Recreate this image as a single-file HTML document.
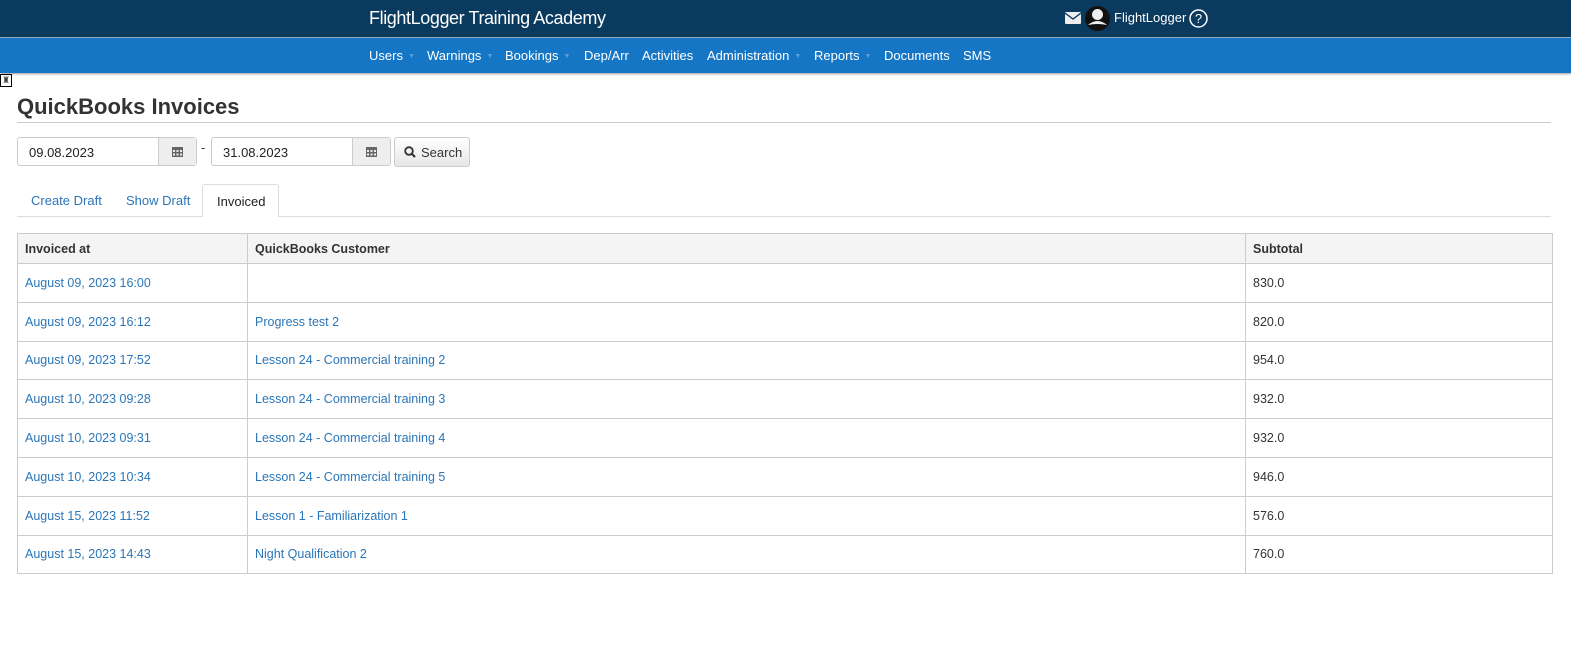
<!DOCTYPE html>
<html><head><meta charset="utf-8"><style>
body{margin:0;font-family:"Liberation Sans",Arial,sans-serif;font-size:13px;color:#333;background:#fff;width:1571px;height:668px;overflow:hidden;position:relative}
.top{position:absolute;left:0;top:0;width:1571px;height:37px;background:#0b3a5f;border-bottom:1px solid #9ab}
.top .t{position:absolute;left:369px;top:8px;color:#fff;font-size:18px;letter-spacing:-0.4px}
.nav{position:absolute;left:0;top:38px;width:1571px;height:35px;background:#1576c6;box-shadow:0 1px 2px #999}
.nav span{position:absolute;top:10px;color:#fff;font-size:13px;white-space:nowrap}
.nav .car{position:static;color:#5f9fd6;font-size:7px;margin-left:5px;vertical-align:2px}
a{color:#2a76b8;text-decoration:none}
h1{position:absolute;left:17px;top:94px;margin:0;font-size:22px;font-weight:bold;color:#333}
.hr{position:absolute;left:17px;width:1534px;top:122px;height:1px;background:#ccc}
.inp{position:absolute;top:137px;height:29px;border:1px solid #ccc;border-radius:3px;box-sizing:border-box;background:#fff}
.inp .v{position:absolute;left:11px;top:7px;font-size:13px;color:#222}
.inp .ad{position:absolute;right:0;top:0;width:37px;height:27px;background:#eee;border-left:1px solid #ccc}
table{position:absolute;left:17px;top:233px;width:1536px;border-collapse:collapse}
td,th{border:1px solid #ccc;padding:0 7px;text-align:left;height:37.8px;font-size:12.5px}
th{background:#f4f4f4;height:29px;font-weight:bold}
</style></head><body>
<div class="top"><div class="t">FlightLogger Training Academy</div>
<svg style="position:absolute;left:1065px;top:12px" width="16" height="12"><rect width="16" height="12" rx="1" fill="#eee"/><path d="M0 1 L8 7 L16 1" stroke="#0b3a5f" stroke-width="1.3" fill="none"/></svg>
<svg style="position:absolute;left:1085px;top:6px" width="25" height="25"><circle cx="12.5" cy="12.5" r="12.5" fill="#111"/><circle cx="12.5" cy="8.5" r="5.5" fill="#eee"/><path d="M3 19 Q12.5 11 22 19 Q12.5 17 3 19Z" fill="#eee"/></svg>
<span style="position:absolute;left:1114px;top:10px;color:#fff;font-size:13px">FlightLogger</span>
<svg style="position:absolute;left:1189px;top:9px" width="19" height="19"><circle cx="9.5" cy="9.5" r="8.5" stroke="#fff" stroke-width="1.5" fill="none"/><text x="9.5" y="14" text-anchor="middle" fill="#fff" font-size="13" font-family="Liberation Sans">?</text></svg>
</div>
<div class="nav">
<span style="left:369px">Users<span class="car">▼</span></span>
<span style="left:427px">Warnings<span class="car">▼</span></span>
<span style="left:505px">Bookings<span class="car">▼</span></span>
<span style="left:584px">Dep/Arr</span>
<span style="left:642px">Activities</span>
<span style="left:707px">Administration<span class="car">▼</span></span>
<span style="left:814px">Reports<span class="car">▼</span></span>
<span style="left:884px">Documents</span>
<span style="left:963px">SMS</span>
</div>
<div style="position:absolute;left:0;top:74px;width:12px;height:13px;border:1px solid #000;box-sizing:border-box;font-size:9px;line-height:11px;text-align:center">♜</div>
<h1>QuickBooks Invoices</h1><div class="hr"></div>
<div class="inp" style="left:17px;width:180px"><span class="v">09.08.2023</span><div class="ad"><svg style="position:absolute;left:13px;top:8px" width="11" height="11"><rect x="0" y="1" width="11" height="10" fill="#666"/><g fill="#eee"><rect x="1" y="4" width="2" height="2"/><rect x="4.5" y="4" width="2" height="2"/><rect x="8" y="4" width="2" height="2"/><rect x="1" y="7.5" width="2" height="2"/><rect x="4.5" y="7.5" width="2" height="2"/><rect x="8" y="7.5" width="2" height="2"/></g></svg></div></div>
<span style="position:absolute;left:201px;top:140px">-</span>
<div class="inp" style="left:211px;width:180px"><span class="v">31.08.2023</span><div class="ad"><svg style="position:absolute;left:13px;top:8px" width="11" height="11"><rect x="0" y="1" width="11" height="10" fill="#666"/><g fill="#eee"><rect x="1" y="4" width="2" height="2"/><rect x="4.5" y="4" width="2" height="2"/><rect x="8" y="4" width="2" height="2"/><rect x="1" y="7.5" width="2" height="2"/><rect x="4.5" y="7.5" width="2" height="2"/><rect x="8" y="7.5" width="2" height="2"/></g></svg></div></div>
<div style="position:absolute;left:394px;top:137px;width:76px;height:30px;box-sizing:border-box;border:1px solid #ccc;border-radius:3px;background:linear-gradient(#fff,#e6e6e6)">
<svg style="position:absolute;left:9px;top:8px" width="12" height="12"><circle cx="5" cy="5" r="3.8" stroke="#333" stroke-width="1.8" fill="none"/><path d="M7.5 7.5 L11 11" stroke="#333" stroke-width="2.2"/></svg>
<span style="position:absolute;left:26px;top:7px">Search</span></div>
<a style="position:absolute;left:31px;top:193px">Create Draft</a>
<a style="position:absolute;left:126px;top:193px">Show Draft</a>
<div style="position:absolute;left:17px;top:216px;width:1534px;height:1px;background:#ddd"></div>
<div style="position:absolute;left:202px;top:184px;width:77px;height:33px;box-sizing:border-box;border:1px solid #ddd;border-bottom:none;border-radius:3px 3px 0 0;background:#fff"><span style="position:absolute;left:14px;top:9px;color:#222">Invoiced</span></div>
<table>
<tr><th style="width:215px">Invoiced at</th><th>QuickBooks Customer</th><th style="width:292px">Subtotal</th></tr>
<tr><td><a>August 09, 2023 16:00</a></td><td></td><td>830.0</td></tr>
<tr><td><a>August 09, 2023 16:12</a></td><td><a>Progress test 2</a></td><td>820.0</td></tr>
<tr><td><a>August 09, 2023 17:52</a></td><td><a>Lesson 24 - Commercial training 2</a></td><td>954.0</td></tr>
<tr><td><a>August 10, 2023 09:28</a></td><td><a>Lesson 24 - Commercial training 3</a></td><td>932.0</td></tr>
<tr><td><a>August 10, 2023 09:31</a></td><td><a>Lesson 24 - Commercial training 4</a></td><td>932.0</td></tr>
<tr><td><a>August 10, 2023 10:34</a></td><td><a>Lesson 24 - Commercial training 5</a></td><td>946.0</td></tr>
<tr><td><a>August 15, 2023 11:52</a></td><td><a>Lesson 1 - Familiarization 1</a></td><td>576.0</td></tr>
<tr><td><a>August 15, 2023 14:43</a></td><td><a>Night Qualification 2</a></td><td>760.0</td></tr>
</table>
</body></html>
